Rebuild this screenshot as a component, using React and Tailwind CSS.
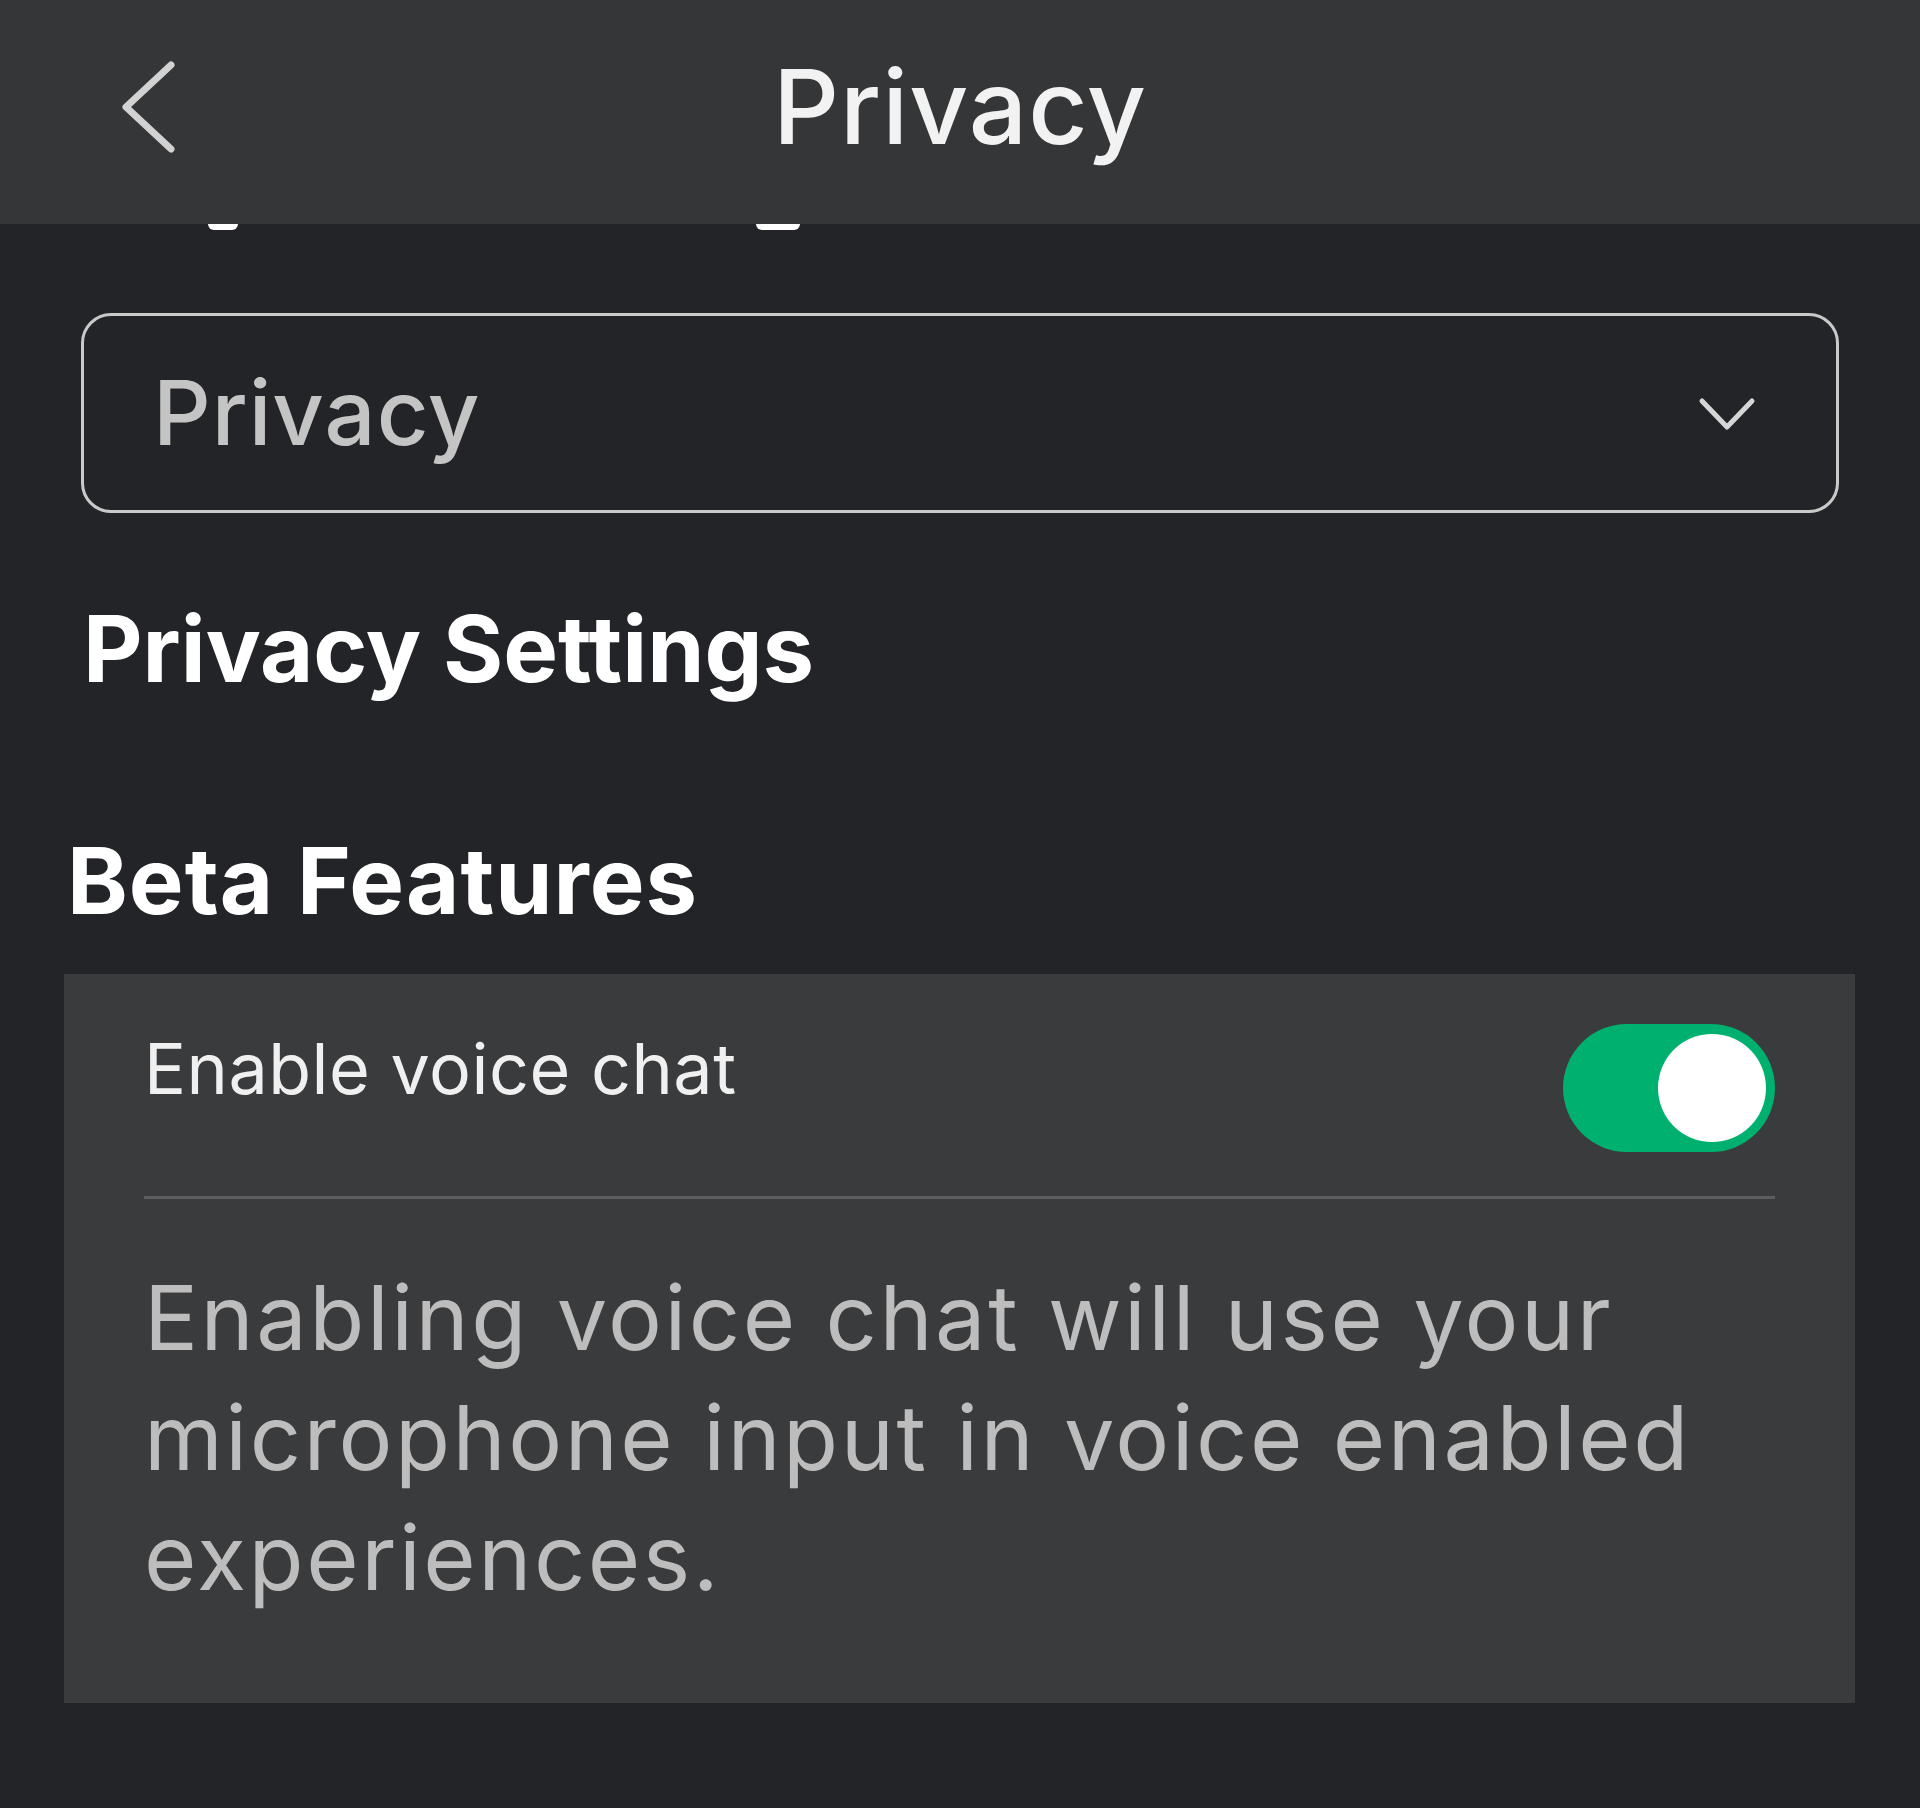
import React, { useState } from "react";

const font = { fontFamily: "Inter, 'Noto Sans', sans-serif" };

export default function App() {
  const [voiceOn, setVoiceOn] = useState(true);

  return (
    <div className="min-h-screen w-full bg-[#232427] pb-[106px]" style={font}>
      {/* top bar */}
      <header className="grid h-[224px] grid-cols-[1fr_auto_1fr] items-center bg-[#353638]">
        <button className="mb-[10px] ml-[120px] flex h-[100px] w-[70px] items-center">
          <svg width="64" height="100" viewBox="0 0 64 100" fill="none">
            <path
              d="M51 8 L6 50 L51 92"
              stroke="#d2d2d2"
              strokeWidth="7"
              strokeLinecap="round"
              strokeLinejoin="round"
            />
          </svg>
        </button>
        <h1 className="mb-[12px] text-[103px] font-medium leading-none tracking-[1px] text-[#f2f2f2]">
          Privacy
        </h1>
        <div />
      </header>

      {/* bits of the row scrolled under the header */}
      <div className="flex h-[6px] items-start">
        <span className="ml-[208px] h-[6px] w-[30px] rounded-b-full bg-white" />
        <span className="ml-[518px] h-[6px] w-[44px] rounded-b-full bg-white" />
      </div>

      {/* category select */}
      <div className="mx-[81px] mt-[83px] flex h-[200px] items-center justify-between rounded-[30px] border-[3px] border-[#c9c9c9] pl-[69px] pr-[80px]">
        <span className="text-[90px] font-medium leading-none tracking-[1px] text-[#c4c4c4]">
          Privacy
        </span>
        <svg width="58" height="40" viewBox="0 0 58 40" fill="none">
          <path
            d="M4 8 L29 34 L54 8"
            stroke="#d6d6d6"
            strokeWidth="5"
            strokeLinecap="round"
            strokeLinejoin="round"
          />
        </svg>
      </div>

      <h2 className="ml-[83px] mt-[90px] text-[92px] font-bold leading-none tracking-normal text-white">
        Privacy Settings
      </h2>

      <h2 className="ml-[67px] mt-[140px] text-[92px] font-bold leading-none tracking-[1px] text-white">
        Beta Features
      </h2>

      {/* beta card */}
      <section className="ml-[64px] mr-[65px] mt-[47px] bg-[#3a3b3d] px-[80px] pb-[85px] pt-[50px]">
        <div className="flex items-start justify-between">
          <span className="mt-[10px] text-[70px] font-normal leading-none tracking-[0.5px] text-[#f0f0f0]">
            Enable voice chat
          </span>
          <button
            onClick={() => setVoiceOn(!voiceOn)}
            className={`flex h-[128px] w-[212px] items-center rounded-full px-[9px] ${
              voiceOn ? "justify-end bg-[#00b06f]" : "justify-start bg-[#5d5e60]"
            }`}
          >
            <span className="h-[108px] w-[108px] rounded-full bg-white" />
          </button>
        </div>

        <div className="mt-[44px] h-[3px] bg-[#5c5d5f]" />

        <p className="mt-[59px] max-w-[1600px] text-[90px] font-normal leading-[120px] tracking-[2.5px] text-[#bdbdbd]">
          Enabling voice chat will use your
          <br />
          microphone input in voice enabled
          <br />
          experiences.
        </p>
      </section>
    </div>
  );
}
